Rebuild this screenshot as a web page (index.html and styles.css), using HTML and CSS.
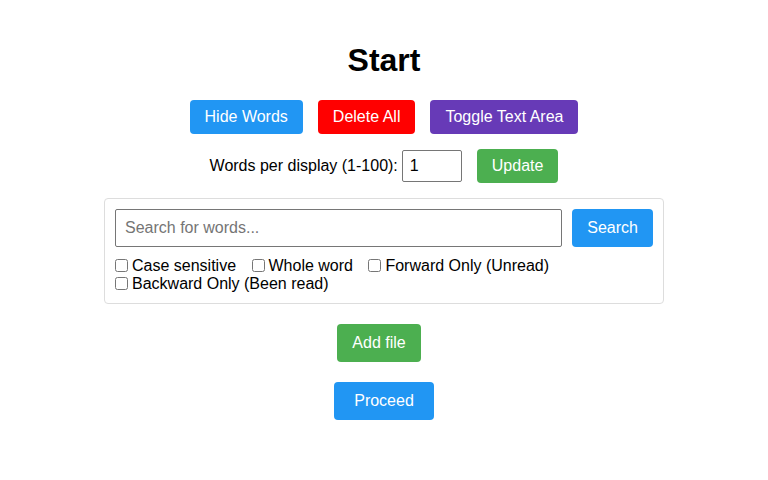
FILE: index.html
```
<!DOCTYPE html>
<html>
<head>
<meta charset="utf-8">
<link rel="stylesheet" href="styles.css">
</head>
<body>
<main class="page">
  <h1 class="title">Start</h1>
  <div class="toolbar">
    <button class="btn btn-blue">Hide Words</button>
    <button class="btn btn-red">Delete All</button>
    <button class="btn btn-purple">Toggle Text Area</button>
  </div>
  <div class="per-display">
    <label class="per-label" for="count">Words per display (1-100):</label>
    <input class="count-input" id="count" type="text" value="1">
    <button class="btn btn-green">Update</button>
  </div>
  <section class="search-box">
    <div class="search-row">
      <input class="search-input" type="text" placeholder="Search for words...">
      <button class="btn btn-blue btn-tall">Search</button>
    </div>
    <div class="options">
      <label class="opt"><input type="checkbox" class="chk">Case sensitive</label>
      <label class="opt"><input type="checkbox" class="chk">Whole word</label>
      <label class="opt"><input type="checkbox" class="chk">Forward Only (Unread)</label>
      <label class="opt"><input type="checkbox" class="chk">Backward Only (Been read)</label>
    </div>
  </section>
  <div class="actions">
    <button class="btn btn-green btn-tall btn-file">Add file</button>
    <button class="btn btn-blue btn-tall btn-wide">Proceed</button>
  </div>
</main>
</body>
</html>
```
FILE: styles.css
```
html, body {
  margin: 0;
  padding: 0;
  background: #fff;
}
body {
  font-family: "Liberation Sans", Arial, sans-serif;
  font-size: 16px;
  color: #000;
}
.page {
  padding: 20px;
  display: flex;
  flex-direction: column;
  align-items: center;
}
.title {
  font-size: 32px;
  font-weight: bold;
  margin: 22px 0 21px;
  line-height: 37px;
}
.btn {
  font-family: "Liberation Sans", Arial, sans-serif;
  font-size: 16px;
  line-height: 18px;
  color: #fff;
  border: none;
  border-radius: 4px;
  padding: 8px 15px;
  cursor: pointer;
}
.btn-tall {
  padding: 10px 15px;
}
.btn-wide {
  padding: 10px 20px;
}
.btn-file {
  margin-right: 10px;
}
.btn-blue { background: #2196f3; }
.btn-red { background: #ff0000; }
.btn-purple { background: #673ab7; }
.btn-green { background: #4caf50; }
.toolbar {
  display: flex;
  gap: 15px;
}
.per-display {
  display: flex;
  align-items: center;
  margin-top: 15px;
}
.per-label {
  margin-right: 4px;
}
.count-input {
  width: 60px;
  height: 32px;
  box-sizing: border-box;
  border: 1px solid #767676;
  border-radius: 2px;
  padding: 0 7px;
  font-family: "Liberation Sans", Arial, sans-serif;
  font-size: 16px;
  margin-right: 15px;
}
.search-box {
  margin-top: 15px;
  width: 560px;
  box-sizing: border-box;
  border: 1px solid #ddd;
  border-radius: 4px;
  padding: 10px;
}
.search-row {
  display: flex;
  gap: 10px;
}
.search-input {
  flex: 1;
  height: 38px;
  box-sizing: border-box;
  border: 1px solid #767676;
  border-radius: 2px;
  padding: 0 9px;
  font-family: "Liberation Sans", Arial, sans-serif;
  font-size: 16px;
}
.search-input::placeholder {
  color: #757575;
}
.options {
  margin-top: 10px;
  line-height: 18px;
}
.opt {
  margin-right: 11px;
  white-space: nowrap;
}
.chk {
  width: 13px;
  height: 13px;
  margin: 0 4px 0 0;
  vertical-align: -1px;
}
.actions {
  margin-top: 20px;
  display: flex;
  flex-direction: column;
  align-items: center;
  gap: 20px;
}
```
